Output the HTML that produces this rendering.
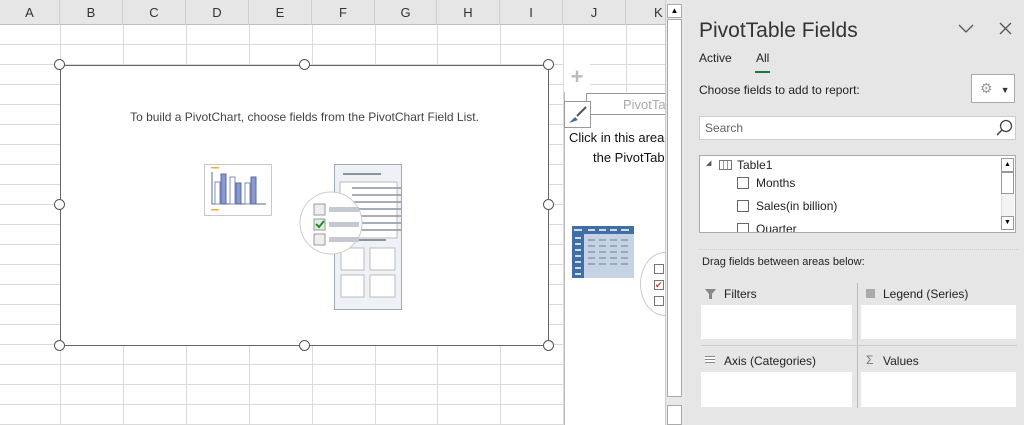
<!DOCTYPE html><html><head><style>
*{margin:0;padding:0;box-sizing:border-box}
body{width:1024px;height:425px;overflow:hidden;background:#fff;font-family:"Liberation Sans",sans-serif;position:relative}
.a{position:absolute}
.hdr{left:0;top:0;width:665px;height:25px;background:#e6e6e6;border-bottom:1px solid #bdbdbd}
.col{top:0;height:25px;border-right:1px solid #d0d0d0;font-size:13px;color:#333;text-align:center;line-height:26px}
.grid{left:0;top:25px;width:665px;height:400px;background-image:linear-gradient(#dadada 1px,transparent 1px);background-size:100% 20px;background-position:0 19px}
.vl{top:25px;width:1px;height:400px;background:#dadada}
.h{width:11px;height:11px;border:1.5px solid #555;border-radius:50%;background:#fff}
.p{background:#e6e6e6;left:685px;top:0;width:339px;height:425px}
.t{font-size:12px;color:#222}
.box{background:#fff}
</style></head><body>
<div class="a hdr"></div>
<div class="a col" style="left:0;width:60px">A</div>
<div class="a col" style="left:60px;width:63px">B</div>
<div class="a col" style="left:123px;width:63px">C</div>
<div class="a col" style="left:186px;width:63px">D</div>
<div class="a col" style="left:249px;width:63px">E</div>
<div class="a col" style="left:312px;width:63px">F</div>
<div class="a col" style="left:375px;width:62px">G</div>
<div class="a col" style="left:437px;width:63px">H</div>
<div class="a col" style="left:500px;width:63px">I</div>
<div class="a col" style="left:563px;width:63px">J</div>
<div class="a col" style="left:626px;width:39px;border:none;text-align:left;padding-left:28px">K</div>
<div class="a grid"></div>
<div class="a vl" style="left:60px"></div><div class="a vl" style="left:123px"></div><div class="a vl" style="left:186px"></div><div class="a vl" style="left:249px"></div><div class="a vl" style="left:312px"></div><div class="a vl" style="left:375px"></div><div class="a vl" style="left:437px"></div><div class="a vl" style="left:500px"></div><div class="a vl" style="left:563px"></div><div class="a vl" style="left:626px"></div>
<div class="a" style="left:564px;top:92px;width:101px;height:333px;background:#fff;border-left:1px solid #bbb"></div>
<div class="a" style="left:564px;top:62px;width:26px;height:30px;background:#fff;color:#bbb;font-size:22px;text-align:center;line-height:30px;font-weight:bold">+</div>
<div class="a" style="left:586px;top:93px;width:79px;height:22px;border:1px solid #999;border-right:none;background:#fff;font-size:13px;color:#aaa;padding-left:36px;line-height:22px">PivotTa</div>
<div class="a" style="left:564px;top:101px;width:27px;height:27px;border:1px solid #999;background:#fff"><svg width="25" height="25"><path d="M4 21 L10 15 L13 18 Z" fill="#3a6ea5"/><path d="M12 14 L21 5" stroke="#555" stroke-width="2"/></svg></div>
<div class="a" style="left:569px;top:130px;font-size:13px;color:#111;white-space:nowrap;width:96px;overflow:hidden">Click in this area</div>
<div class="a" style="left:593px;top:150px;font-size:13px;color:#111;white-space:nowrap;width:72px;overflow:hidden">the PivotTable</div>
<svg class="a" style="left:572px;top:226px" width="62" height="52"><rect width="62" height="52" fill="#c5d3e4"/><rect width="62" height="8" fill="#3f6fa6"/><rect width="12" height="52" fill="#3f6fa6"/>
<g stroke="#fff" stroke-width="1.5"><path d="M2 4h8M16 4h7M27 4h7M38 4h7M49 4h8M3 12h6M3 18h6M3 24h6M3 30h6M3 36h6M3 42h6M3 48h6"/></g>
<g stroke="#8a9ab0" stroke-width="1.5"><path d="M16 14h7M27 14h7M38 14h7M49 14h7M16 20h7M27 20h7M38 20h7M49 20h7M16 26h7M27 26h7M38 26h7M49 26h7M16 32h7M27 32h7M38 32h7M49 32h7M16 38h7M27 38h7M38 38h7M49 38h7"/></g></svg>
<div class="a" style="left:640px;top:252px;width:50px;height:64px;border:1px solid #ccc;border-radius:50%;background:#fff"></div>
<div class="a" style="left:654px;top:264px;width:10px;height:10px;border:1px solid #777"></div>
<div class="a" style="left:654px;top:280px;width:10px;height:10px;border:1px solid #777;color:#d04030;font-size:9px;line-height:9px">✔</div>
<div class="a" style="left:654px;top:296px;width:10px;height:10px;border:1px solid #777"></div>
<div class="a" style="left:665px;top:0;width:20px;height:425px;background:#e8e8e8;border-left:1px solid #ccc"></div>
<div class="a" style="left:667px;top:19px;width:15px;height:378px;background:#fff;border:1px solid #aaa"></div>
<div class="a" style="left:667px;top:4px;width:15px;height:14px;background:#fff;border:1px solid #aaa;font-size:8px;text-align:center;line-height:12px">▲</div>
<div class="a" style="left:667px;top:405px;width:15px;height:20px;background:#fff;border:1px solid #aaa"></div>
<div class="a" style="left:60px;top:65px;width:489px;height:281px;background:#fff;border:1.5px solid #666"></div>
<div class="a h" style="left:54px;top:59px"></div><div class="a h" style="left:299px;top:59px"></div><div class="a h" style="left:543px;top:59px"></div>
<div class="a h" style="left:54px;top:199px"></div><div class="a h" style="left:543px;top:199px"></div>
<div class="a h" style="left:54px;top:340px"></div><div class="a h" style="left:299px;top:340px"></div><div class="a h" style="left:543px;top:340px"></div>
<div class="a" style="left:60px;top:110px;width:489px;text-align:center;font-size:12px;color:#444">To build a PivotChart, choose fields from the PivotChart Field List.</div>
<svg class="a" style="left:204px;top:164px" width="206" height="146">
<rect x="0.5" y="0.5" width="67" height="51" fill="#fff" stroke="#c8c8c8"/>
<rect x="7" y="3" width="8" height="1.5" fill="#f0b040"/><rect x="7" y="45" width="8" height="1.5" fill="#f0b040"/>
<path d="M8 8V40H62" stroke="#5a6aa0" fill="none"/>
<rect x="11" y="18" width="5" height="22" fill="#fff" stroke="#7c8cc0"/><rect x="17" y="10" width="5" height="30" fill="#8a9ad0" stroke="#5a6aa0"/>
<rect x="26" y="13" width="5" height="27" fill="#fff" stroke="#7c8cc0"/><rect x="32" y="19" width="5" height="21" fill="#8a9ad0" stroke="#5a6aa0"/>
<rect x="41" y="19" width="5" height="21" fill="#fff" stroke="#7c8cc0"/><rect x="47" y="13" width="5" height="27" fill="#8a9ad0" stroke="#5a6aa0"/>
<rect x="130.5" y="0.5" width="67" height="145" fill="#eef2f7" stroke="#a0a8b4"/>
<rect x="139" y="9" width="38" height="2" fill="#8a94a0"/>
<rect x="136" y="18" width="57" height="56" fill="#fff" stroke="#bbb"/>
<g stroke="#8a94a0" stroke-width="1.5"><path d="M148 24h49M148 31h49M148 38h49M148 45h49M148 52h49M148 59h49M148 66h49"/></g>
<rect x="139" y="75" width="43" height="2" fill="#8a94a0"/>
<rect x="137" y="84" width="23" height="22" fill="#fff" stroke="#bbb"/><rect x="166" y="84" width="25" height="22" fill="#fff" stroke="#bbb"/>
<rect x="137" y="111" width="23" height="22" fill="#fff" stroke="#bbb"/><rect x="166" y="111" width="25" height="22" fill="#fff" stroke="#bbb"/>
<circle cx="127" cy="59" r="31" fill="#fff" stroke="#ccc"/>
<rect x="110" y="40" width="11" height="11" fill="#eee" stroke="#999"/><rect x="110" y="55" width="11" height="11" fill="#dfeedf" stroke="#999"/><rect x="110" y="70" width="11" height="11" fill="#eee" stroke="#999"/>
<path d="M112 60l3 3 5-6" stroke="#2a8a2a" stroke-width="2" fill="none"/>
<rect x="125" y="43" width="30" height="5" fill="#c4c8d0"/><rect x="125" y="58" width="30" height="5" fill="#c4c8d0"/><rect x="125" y="73" width="30" height="5" fill="#c4c8d0"/>
</svg>
<div class="a p"></div>
<div class="a" style="left:699px;top:19px;font-size:21px;color:#333">PivotTable Fields</div>
<svg class="a" style="left:958px;top:22px" width="60" height="14"><path d="M1 3l7 7 7-7" stroke="#555" fill="none" stroke-width="1.3"/><path d="M42 1l11 11M53 1L42 12" stroke="#555" stroke-width="1.3"/></svg>
<div class="a t" style="left:699px;top:51px">Active</div>
<div class="a t" style="left:756px;top:51px">All</div>
<div class="a" style="left:755px;top:71px;width:15px;height:2px;background:#217346"></div>
<div class="a t" style="left:699px;top:83px">Choose fields to add to report:</div>
<div class="a" style="left:971px;top:74px;width:44px;height:29px;background:#fff;border:1px solid #aaa;font-size:14px;color:#999;padding:5px 0 0 8px">⚙<span style="color:#333;font-size:9px;margin-left:8px">▼</span></div>
<div class="a" style="left:699px;top:116px;width:317px;height:24px;background:#fff;border:1px solid #ccc;font-size:12px;color:#666;padding:4px 5px">Search</div>
<svg class="a" style="left:996px;top:119px" width="18" height="18"><circle cx="10" cy="7" r="5.5" stroke="#444" fill="none" stroke-width="1.3"/><path d="M6 11l-5 5" stroke="#444" stroke-width="1.5"/></svg>
<div class="a" style="left:699px;top:155px;width:317px;height:78px;background:#fff;border:1px solid #aaa;overflow:hidden">
<div class="a" style="left:301px;top:2px;width:13px;height:72px;border-left:1px solid #ddd;background:#f3f3f3"></div>
<div class="a" style="left:301px;top:2px;width:13px;height:14px;border:1px solid #999;background:#fff;font-size:7px;text-align:center;line-height:12px">▲</div>
<div class="a" style="left:301px;top:16px;width:13px;height:22px;border:1px solid #999;background:#fff"></div>
<div class="a" style="left:301px;top:60px;width:13px;height:14px;border:1px solid #999;background:#fff;font-size:7px;text-align:center;line-height:12px">▼</div>
<div class="a" style="left:6px;top:3px;font-size:7px;color:#555">◢</div>
<div class="a" style="left:19px;top:4px;width:13px;height:10px;border:1px solid #777;background:repeating-linear-gradient(90deg,transparent 0 3px,#999 3px 4px)"></div>
<div class="a t" style="left:37px;top:2px">Table1</div>
<div class="a" style="left:37px;top:21px;width:12px;height:12px;border:1px solid #666"></div><div class="a t" style="left:56px;top:20px">Months</div>
<div class="a" style="left:37px;top:44px;width:12px;height:12px;border:1px solid #666"></div><div class="a t" style="left:56px;top:43px">Sales(in billion)</div>
<div class="a" style="left:37px;top:67px;width:12px;height:12px;border:1px solid #666"></div><div class="a t" style="left:56px;top:66px">Quarter</div>
</div>
<div class="a" style="left:699px;top:249px;width:320px;border-top:1px dotted #ccc"></div>
<div class="a t" style="left:702px;top:256px;font-size:11px">Drag fields between areas below:</div>
<div class="a" style="left:857px;top:283px;width:1px;height:125px;background:#bbb"></div>
<div class="a" style="left:701px;top:345px;width:316px;height:1px;background:#ccc"></div>
<svg class="a" style="left:705px;top:288px" width="12" height="12"><path d="M0 1h11L7 6v5H4V6Z" fill="#888"/></svg>
<div class="a t" style="left:724px;top:287px">Filters</div>
<div class="a" style="left:866px;top:289px;width:9px;height:9px;background:#aaa"></div>
<div class="a t" style="left:883px;top:287px">Legend (Series)</div>
<div class="a" style="left:705px;top:356px;width:10px;height:7px;border-top:1px solid #888;border-bottom:1px solid #888;background:linear-gradient(#fff 2px,#888 2px 3px,#fff 3px)"></div>
<div class="a t" style="left:724px;top:354px">Axis (Categories)</div>
<div class="a t" style="left:866px;top:353px;color:#777">Σ</div>
<div class="a t" style="left:883px;top:354px">Values</div>
<div class="a box" style="left:701px;top:305px;width:151px;height:34px"></div>
<div class="a box" style="left:861px;top:305px;width:155px;height:34px"></div>
<div class="a box" style="left:701px;top:372px;width:151px;height:35px"></div>
<div class="a box" style="left:861px;top:372px;width:155px;height:35px"></div>
</body></html>
